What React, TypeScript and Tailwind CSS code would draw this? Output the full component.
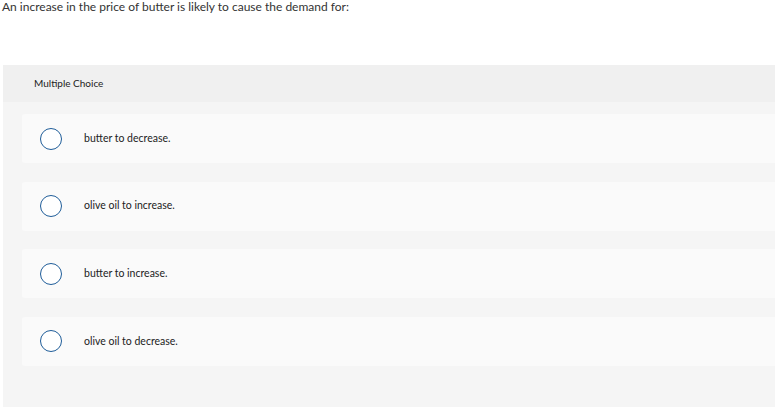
import React from "react";

const options = [
  "butter to decrease.",
  "olive oil to increase.",
  "butter to increase.",
  "olive oil to decrease.",
];

export default function App() {
  return (
    <div
      className="w-[775px] h-[407px] overflow-hidden bg-white text-[#222]"
      style={{ fontFamily: "Lato, 'Open Sans', sans-serif" }}
    >
      <div className="pl-[2px] text-[12px] leading-[13px] text-[#333] whitespace-nowrap">
        An increase in the price of butter is likely to cause the demand for:
      </div>
      <div className="mt-[52px] ml-[3px] bg-[#f5f5f5] h-[342px]">
        <div className="h-[37px] bg-[#f0f0f0] flex items-center pl-[31px] text-[10px] text-[#222]">
          Multiple Choice
        </div>
        <div className="pl-[19px] pt-[12px] flex flex-col gap-[18.67px]">
          {options.map((o) => (
            <div
              key={o}
              className="h-[49px] bg-[#fafafa] rounded-l-[3px] flex items-center"
            >
              <div className="ml-[18px] w-[22px] h-[22px] rounded-full border-[1.5px] border-[#1f5d99] bg-white shrink-0" />
              <div className="ml-[22px] text-[10.5px] text-[#222]">{o}</div>
            </div>
          ))}
        </div>
      </div>
    </div>
  );
}
